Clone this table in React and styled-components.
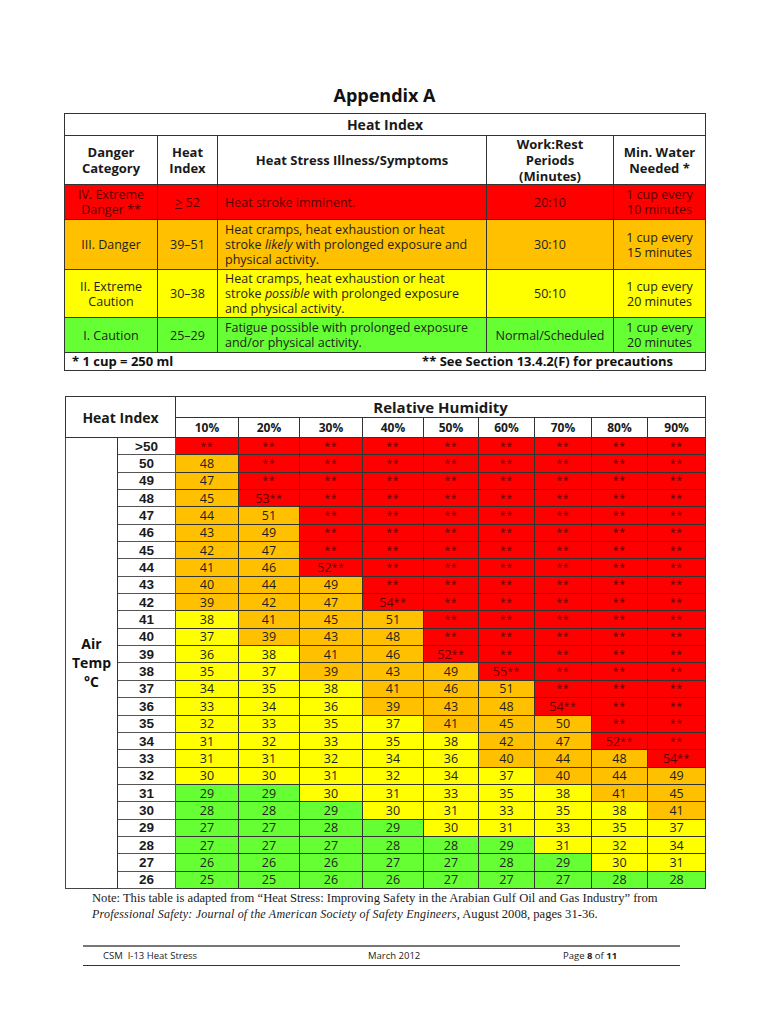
import React from "react";
import styled, { createGlobalStyle } from "styled-components";

const GlobalStyle = createGlobalStyle`
  body {
    margin: 0;
    background: #ffffff;
  }
`;

const SHADES = {
  red: "#ff0000",
  orange: "#ffc000",
  yellow: "#ffff00",
  green: "#66ff33",
};

const Page = styled.div`
  width: 768px;
  height: 1024px;
  box-sizing: border-box;
  padding: 84px 63px 0 64px;
  font-family: "Open Sans", "DejaVu Sans", sans-serif;
  color: #1a1a1a;
`;

const Title = styled.h1`
  margin: 0 0 7px;
  font-size: 18px;
  line-height: 22px;
  font-weight: 700;
  text-align: center;
  color: #111;
`;

/* ---------- top table ---------- */

const IndexTable = styled.table`
  width: 641px;
  table-layout: fixed;
  border-collapse: collapse;
  border: 1px solid #444;
`;

const Caption = styled.th`
  height: 21px;
  padding: 0;
  font-size: 14px;
  font-weight: 700;
  text-align: center;
  border: 1px solid #333;
`;

const HeadCell = styled.th`
  height: 48px;
  padding: 0;
  font-size: 13px;
  line-height: 16px;
  font-weight: 700;
  text-align: center;
  vertical-align: middle;
  border: 1px solid #333;
`;

const LevelRow = styled.tr`
  background: ${(p) => SHADES[p.$shade]};
  color: ${(p) => (p.$shade === "red" ? "#5a0000" : "#1e1e1e")};
  height: ${(p) => p.$h}px;
`;

const LevelCell = styled.td`
  padding: ${(p) => (p.$left ? "0 4px 0 7px" : "0 2px")};
  font-size: 12.5px;
  line-height: 15px;
  text-align: ${(p) => (p.$left ? "left" : "center")};
  vertical-align: middle;
  border: 1px solid #333;
`;

const Ge = styled.span`
  text-decoration: underline;
`;

const NoteRow = styled.td`
  height: 17px;
  padding: 0 32px 0 7px;
  border: 1px solid #333;
`;

const NoteLine = styled.div`
  display: flex;
  justify-content: space-between;
  font-size: 13px;
  line-height: 17px;
  font-weight: 700;
  color: #111;
`;

/* ---------- humidity grid ---------- */

const Grid = styled.table`
  margin: 25px 0 0 1px;
  width: 640px;
  table-layout: fixed;
  border-collapse: collapse;
  border: 1px solid #444;
`;

const GridCorner = styled.th`
  padding: 0;
  font-size: 14px;
  font-weight: 700;
  text-align: center;
  border: 1px solid #333;
`;

const GridTitle = styled.th`
  height: 20px;
  padding: 0;
  font-size: 15px;
  font-weight: 700;
  text-align: center;
  border: 1px solid #333;
`;

const Percent = styled.th`
  height: 19px;
  padding: 0;
  font-size: 12px;
  font-weight: 700;
  text-align: center;
  border: 1px solid #333;
`;

const DataRow = styled.tr`
  height: 17.35px;
`;

const AirLabel = styled.td`
  padding: 0;
  font-size: 14px;
  line-height: 19px;
  font-weight: 700;
  text-align: center;
  vertical-align: middle;
  border-right: 1px solid #333;
  color: #111;
`;

const Temp = styled.td`
  padding: 0;
  font-family: "Liberation Sans", Arial, sans-serif;
  font-size: 13.5px;
  font-weight: 700;
  text-align: center;
  background: #ffffff;
  border: 1px solid #555;
  color: #1a1a1a;
`;

const Value = styled.td`
  padding: 0;
  font-size: 12.5px;
  line-height: 15px;
  text-align: center;
  background: ${(p) => SHADES[p.$shade]};
  color: ${(p) => (p.$shade === "red" ? "#5a0000" : "#1e1e1e")};
  border: 1px solid #333;
`;

const Stars = styled.span`
  font-size: 10px;
  letter-spacing: 1px;
  vertical-align: 1px;
`;

/* ---------- notes & footer ---------- */

const Source = styled.p`
  margin: 1px 0 0 28px;
  font-family: "Liberation Serif", "Times New Roman", serif;
  font-size: 12.6px;
  line-height: 16px;
  color: #1a1a1a;
`;

const Journal = styled.i`
  font-size: 12px;
  letter-spacing: 0.2px;
`;

const Footer = styled.footer`
  margin: 23px 25px 0 19px;
  padding: 3px 0 3px 20px;
  border-top: 2px solid #777;
  border-bottom: 1px solid #333;
  display: grid;
  grid-template-columns: 265px 195px 1fr;
  font-family: "Open Sans", sans-serif;
  font-size: 9.5px;
  line-height: 12px;
  color: #222;
`;

const levels = [
  {
    shade: "red",
    h: 35,
    cat: ["IV. Extreme", "Danger **"],
    index: (
      <>
        <Ge>&gt;</Ge> 52
      </>
    ),
    symptoms: <>Heat stroke imminent.</>,
    rest: "20:10",
    water: "10 minutes",
  },
  {
    shade: "orange",
    h: 50,
    cat: ["III. Danger"],
    index: "39–51",
    symptoms: (
      <>
        Heat cramps, heat exhaustion or heat
        <br />
        stroke <i>likely</i> with prolonged exposure and
        <br />
        physical activity.
      </>
    ),
    rest: "30:10",
    water: "15 minutes",
  },
  {
    shade: "yellow",
    h: 48,
    cat: ["II. Extreme", "Caution"],
    index: "30–38",
    symptoms: (
      <>
        Heat cramps, heat exhaustion or heat
        <br />
        stroke <i>possible</i> with prolonged exposure
        <br />
        and physical activity.
      </>
    ),
    rest: "50:10",
    water: "20 minutes",
  },
  {
    shade: "green",
    h: 35,
    cat: ["I. Caution"],
    index: "25–29",
    symptoms: (
      <>
        Fatigue possible with prolonged exposure
        <br />
        and/or physical activity.
      </>
    ),
    rest: "Normal/Scheduled",
    water: "20 minutes",
  },
];

const humidity = ["10%", "20%", "30%", "40%", "50%", "60%", "70%", "80%", "90%"];
const widths = [63, 61, 63, 61, 55, 56, 57, 56, 58];

const S = "**";
const grid = [
  [">50", [S, S, S, S, S, S, S, S, S]],
  ["50", [48, S, S, S, S, S, S, S, S]],
  ["49", [47, S, S, S, S, S, S, S, S]],
  ["48", [45, "53**", S, S, S, S, S, S, S]],
  ["47", [44, 51, S, S, S, S, S, S, S]],
  ["46", [43, 49, S, S, S, S, S, S, S]],
  ["45", [42, 47, S, S, S, S, S, S, S]],
  ["44", [41, 46, "52**", S, S, S, S, S, S]],
  ["43", [40, 44, 49, S, S, S, S, S, S]],
  ["42", [39, 42, 47, "54**", S, S, S, S, S]],
  ["41", [38, 41, 45, 51, S, S, S, S, S]],
  ["40", [37, 39, 43, 48, S, S, S, S, S]],
  ["39", [36, 38, 41, 46, "52**", S, S, S, S]],
  ["38", [35, 37, 39, 43, 49, "55**", S, S, S]],
  ["37", [34, 35, 38, 41, 46, 51, S, S, S]],
  ["36", [33, 34, 36, 39, 43, 48, "54**", S, S]],
  ["35", [32, 33, 35, 37, 41, 45, 50, S, S]],
  ["34", [31, 32, 33, 35, 38, 42, 47, "52**", S]],
  ["33", [31, 31, 32, 34, 36, 40, 44, 48, "54**"]],
  ["32", [30, 30, 31, 32, 34, 37, 40, 44, 49]],
  ["31", [29, 29, 30, 31, 33, 35, 38, 41, 45]],
  ["30", [28, 28, 29, 30, 31, 33, 35, 38, 41]],
  ["29", [27, 27, 28, 29, 30, 31, 33, 35, 37]],
  ["28", [27, 27, 27, 28, 28, 29, 31, 32, 34]],
  ["27", [26, 26, 26, 27, 27, 28, 29, 30, 31]],
  ["26", [25, 25, 26, 26, 27, 27, 27, 28, 28]],
];

function shadeOf(v) {
  if (typeof v === "string") return "red";
  if (v >= 52) return "red";
  if (v >= 39) return "orange";
  if (v >= 30) return "yellow";
  return "green";
}

function CellText({ v }) {
  if (v === S) return <Stars>**</Stars>;
  if (typeof v === "string") {
    return (
      <>
        {v.replace("**", "")}
        <Stars>**</Stars>
      </>
    );
  }
  return v;
}

export default function App() {
  return (
    <Page>
      <GlobalStyle />
      <Title>Appendix A</Title>

      <IndexTable>
        <colgroup>
          <col style={{ width: 93 }} />
          <col style={{ width: 60 }} />
          <col style={{ width: 269 }} />
          <col style={{ width: 127 }} />
          <col style={{ width: 92 }} />
        </colgroup>
        <thead>
          <tr>
            <Caption colSpan={5}>Heat Index</Caption>
          </tr>
          <tr>
            <HeadCell>
              Danger
              <br />
              Category
            </HeadCell>
            <HeadCell>
              Heat
              <br />
              Index
            </HeadCell>
            <HeadCell>Heat Stress Illness/Symptoms</HeadCell>
            <HeadCell>
              Work:Rest
              <br />
              Periods
              <br />
              (Minutes)
            </HeadCell>
            <HeadCell>
              Min. Water
              <br />
              Needed *
            </HeadCell>
          </tr>
        </thead>
        <tbody>
          {levels.map((l) => (
            <LevelRow key={l.rest} $shade={l.shade} $h={l.h}>
              <LevelCell>
                {l.cat.map((c, i) => (
                  <React.Fragment key={c}>
                    {i > 0 && <br />}
                    {c}
                  </React.Fragment>
                ))}
              </LevelCell>
              <LevelCell>{l.index}</LevelCell>
              <LevelCell $left>{l.symptoms}</LevelCell>
              <LevelCell>{l.rest}</LevelCell>
              <LevelCell>
                1 cup every
                <br />
                {l.water}
              </LevelCell>
            </LevelRow>
          ))}
          <tr>
            <NoteRow colSpan={5}>
              <NoteLine>
                <span>* 1 cup = 250 ml</span>
                <span>** See Section 13.4.2(F) for precautions</span>
              </NoteLine>
            </NoteRow>
          </tr>
        </tbody>
      </IndexTable>

      <Grid>
        <colgroup>
          <col style={{ width: 52 }} />
          <col style={{ width: 58 }} />
          {widths.map((w, i) => (
            <col key={i} style={{ width: w }} />
          ))}
        </colgroup>
        <thead>
          <tr>
            <GridCorner colSpan={2} rowSpan={2}>
              Heat Index
            </GridCorner>
            <GridTitle colSpan={9}>Relative Humidity</GridTitle>
          </tr>
          <tr>
            {humidity.map((h) => (
              <Percent key={h}>{h}</Percent>
            ))}
          </tr>
        </thead>
        <tbody>
          {grid.map(([t, vals], r) => (
            <DataRow key={t}>
              {r === 0 && (
                <AirLabel rowSpan={grid.length}>
                  Air
                  <br />
                  Temp
                  <br />
                  °C
                </AirLabel>
              )}
              <Temp>{t}</Temp>
              {vals.map((v, i) => (
                <Value key={i} $shade={shadeOf(v)}>
                  <CellText v={v} />
                </Value>
              ))}
            </DataRow>
          ))}
        </tbody>
      </Grid>

      <Source>
        Note: This table is adapted from “Heat Stress: Improving Safety in the Arabian Gulf Oil and Gas
        Industry” from
        <br />
        <Journal>Professional Safety: Journal of the American Society of Safety Engineers</Journal>, August
        2008, pages 31-36.
      </Source>

      <Footer>
        <span>CSM&nbsp; I-13 Heat Stress</span>
        <span>March 2012</span>
        <span>
          Page <b>8</b> of <b>11</b>
        </span>
      </Footer>
    </Page>
  );
}
